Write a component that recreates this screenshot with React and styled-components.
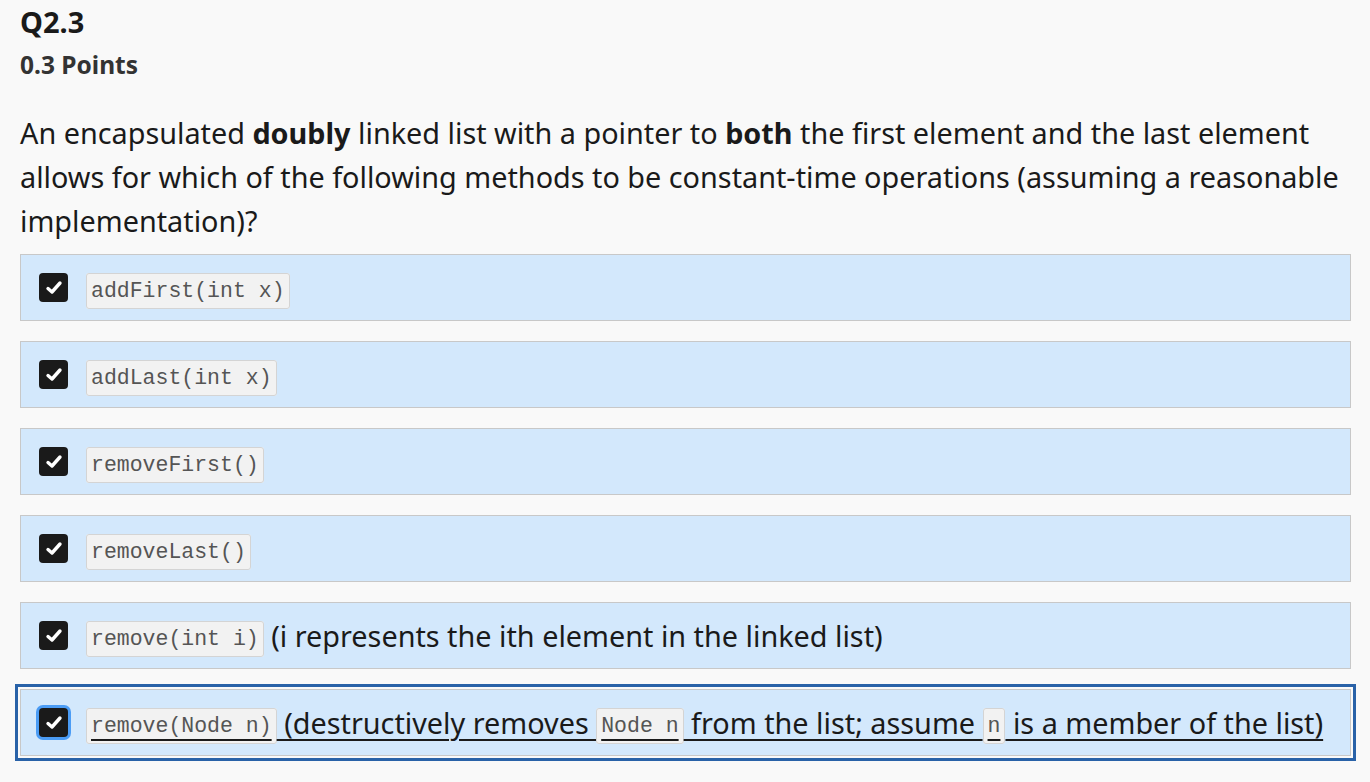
import React from 'react';
import styled, { createGlobalStyle } from 'styled-components';

const GlobalStyle = createGlobalStyle`
  html, body {
    margin: 0;
    padding: 0;
    background: #f9f9f9;
  }
  body {
    font-family: 'Noto Sans', 'Open Sans', sans-serif;
    color: #1a1a1a;
  }
`;

// 문제 전체를 감싸는 영역
const Page = styled.div`
  padding: 2px 19px 20px 20px;
`;

const Title = styled.h2`
  font-size: 29px;
  font-weight: 700;
  line-height: 40px;
  margin: 0;
  color: #1a1a1a;
`;

const Points = styled.h3`
  font-size: 24.5px;
  font-weight: 700;
  line-height: 34px;
  margin: 6px 0 0;
  color: #333;
`;

const Prompt = styled.p`
  font-size: 28.8px;
  line-height: 44px;
  margin: 29px 0 11px;
  color: #1a1a1a;
`;

const Options = styled.div`
  display: flex;
  flex-direction: column;
  gap: 20px;
`;

// 선택지 한 줄. $focused 가 있으면 파란 테두리가 생깁니다.
const Option = styled.label`
  display: flex;
  align-items: center;
  gap: 18px;
  height: 65px;
  padding: 0 18px;
  background: #d3e8fc;
  border: 1px solid #c8c8c8;
  outline: ${({ $focused }) => ($focused ? '3px solid #2962a8' : 'none')};
  outline-offset: 2px;
  text-decoration: ${({ $focused }) => ($focused ? 'underline' : 'none')};
  text-decoration-thickness: 2px;
  text-underline-offset: 5px;
`;

const Check = styled.span`
  flex: none;
  width: 29px;
  height: 29px;
  border-radius: 4px;
  background: #1a1a1a;
  display: flex;
  align-items: center;
  justify-content: center;
  box-shadow: ${({ $focused }) => ($focused ? '0 0 0 3px #4b9cf5' : 'none')};
`;

const Label = styled.span`
  font-size: 28.8px;
  color: #1a1a1a;
  white-space: nowrap;
`;

const Code = styled.code`
  font-family: 'Courier New', 'Liberation Mono', monospace;
  font-size: 21.5px;
  color: #555;
  background: #f2f2f2;
  border: 1px solid #d4d4d4;
  border-radius: 3px;
  padding: 5px 4px 5px;
  vertical-align: 2px;
`;

const Tick = () => (
  <svg width="20" height="20" viewBox="0 0 20 20">
    <path d="M4 10.5 L8 14 L16 5" fill="none" stroke="#fff" strokeWidth="3.4" strokeLinecap="round" strokeLinejoin="round" />
  </svg>
);

const items = [
  [<Code key="c">addFirst(int x)</Code>],
  [<Code key="c">addLast(int x)</Code>],
  [<Code key="c">removeFirst()</Code>],
  [<Code key="c">removeLast()</Code>],
  [<Code key="c">remove(int i)</Code>, ' (i represents the ith element in the linked list)'],
];

export default function App() {
  return (
    <>
      <GlobalStyle />
      <Page>
        <Title>Q2.3</Title>
        <Points>0.3 Points</Points>
        <Prompt>
          An encapsulated <b>doubly</b> linked list with a pointer to <b>both</b> the first element and the last element
          allows for which of the following methods to be constant-time operations (assuming a reasonable
          implementation)?
        </Prompt>
        <Options>
          {items.map((parts, i) => (
            <Option key={i}>
              <Check><Tick /></Check>
              <Label>{parts}</Label>
            </Option>
          ))}
          <Option $focused>
            <Check $focused><Tick /></Check>
            <Label>
              <Code>remove(Node n)</Code> (destructively removes <Code>Node n</Code> from the list; assume <Code>n</Code> is a
              member of the list)
            </Label>
          </Option>
        </Options>
      </Page>
    </>
  );
}
